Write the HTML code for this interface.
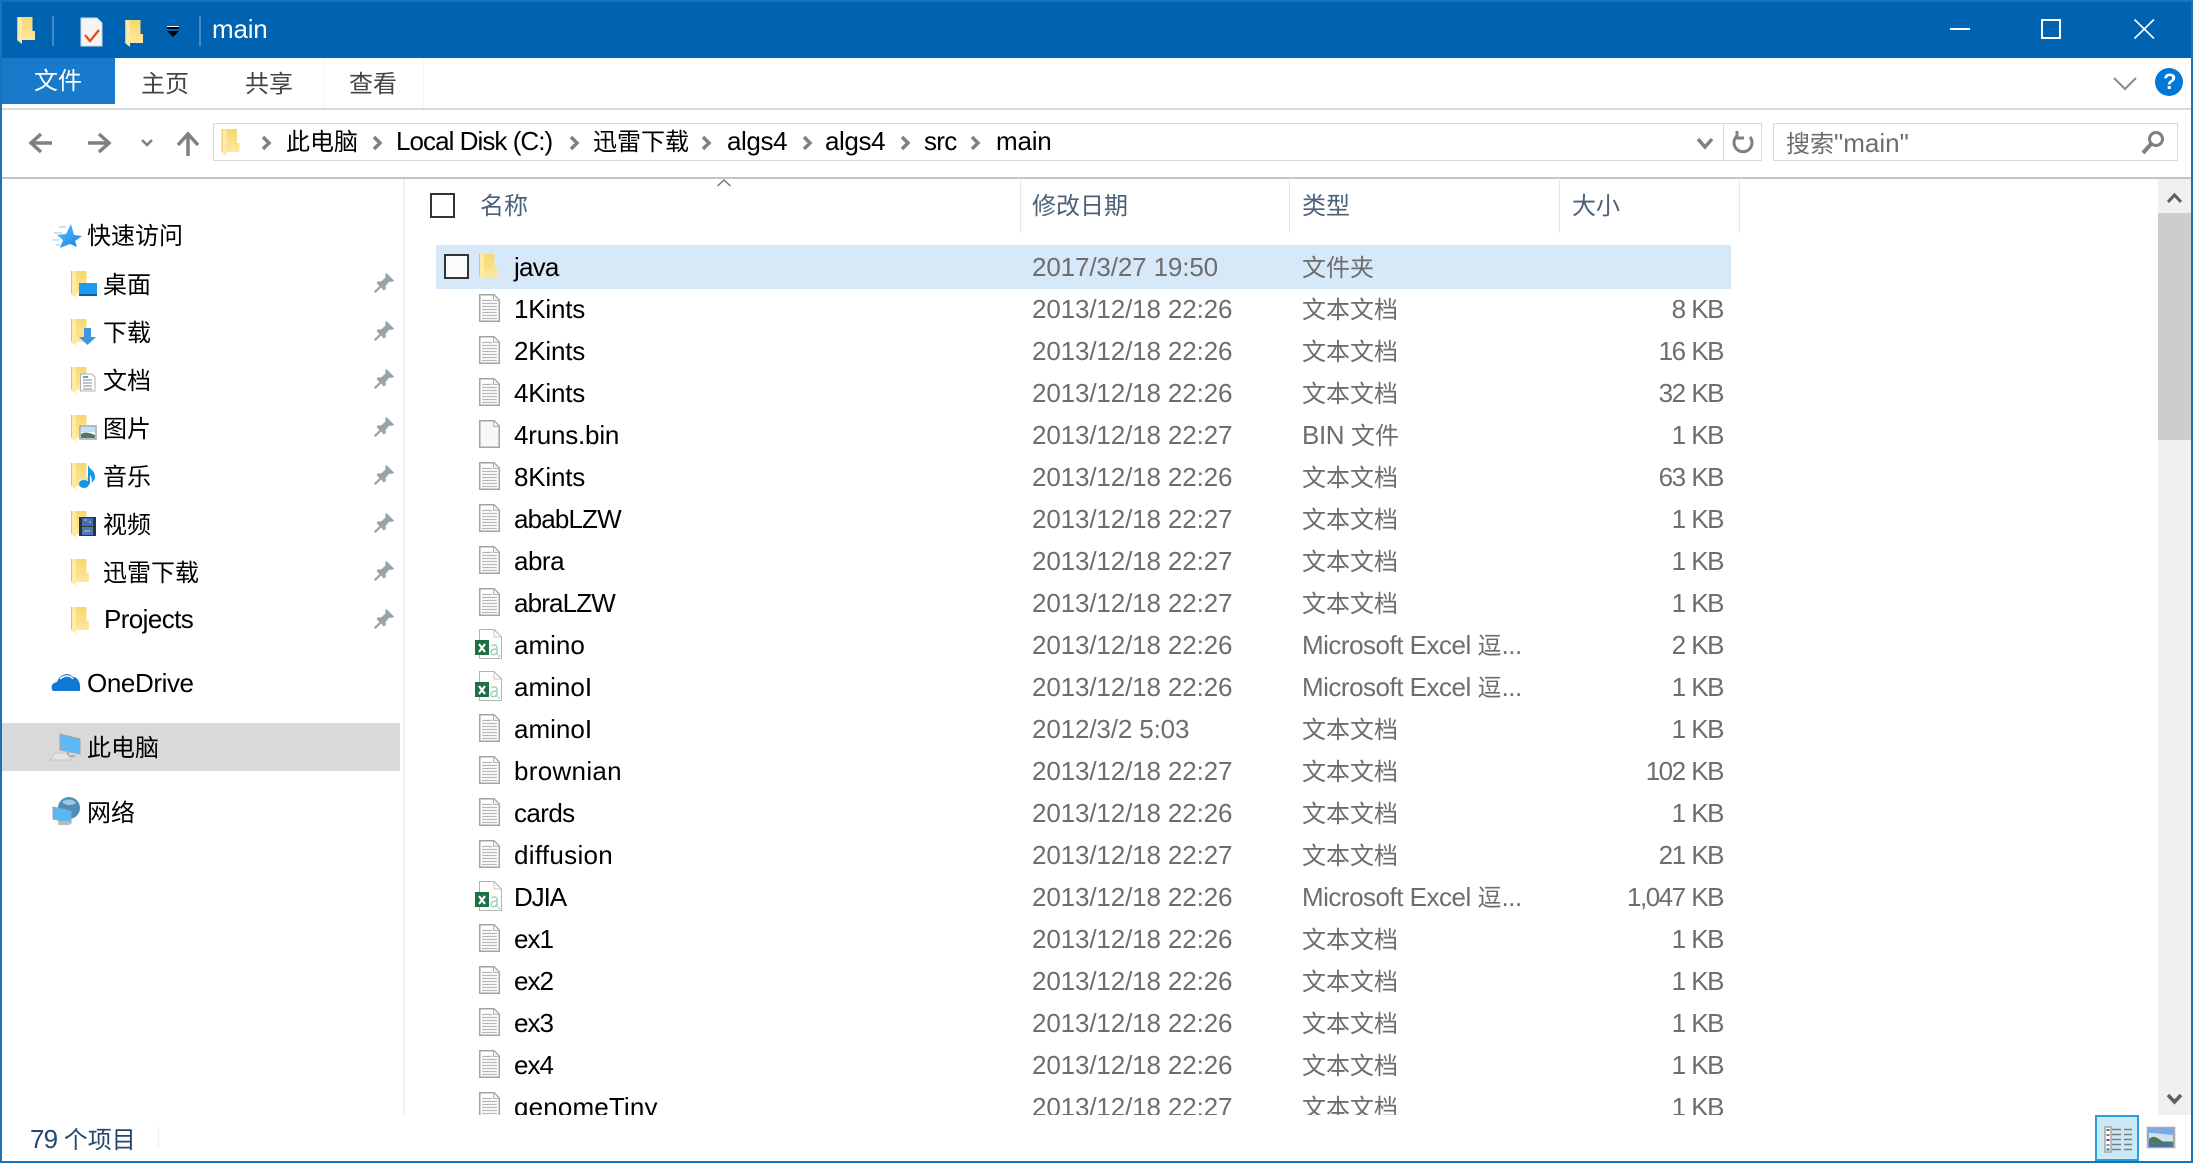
<!DOCTYPE html>
<html lang="zh"><head><meta charset="utf-8"><title>main</title>
<style>
html,body{margin:0;padding:0;background:#fff;width:2193px;height:1163px;overflow:hidden}
body{position:relative;font:24px/34px "Liberation Sans","Noto Sans CJK SC",sans-serif;color:#000}
div,span{position:absolute;white-space:nowrap}
svg{position:absolute;overflow:visible}
i{font-style:normal;font-size:24px;letter-spacing:0}
.r{left:0;width:2150px;height:42px;overflow:visible}
.n{left:514px;top:4px;font-size:26px;letter-spacing:-.2px}
.d{left:1032px;top:4px;color:#6d6d6d;font-size:26px;letter-spacing:-.13px}
.k{left:1302px;top:6px;color:#6d6d6d}
.m{top:4px;font-size:26px;letter-spacing:-.5px}
.s{right:427px;top:4px;color:#6d6d6d;font-size:26px;letter-spacing:-1.5px;word-spacing:1px}
.h{top:190px;color:#4c607a}
.sb{left:103px;letter-spacing:0}
.sep{background:#e5e5e5;width:1px;top:178px;height:55px}
.tab{top:68px;color:#444}
.ad{top:126px;color:#000}
.al{top:124px;color:#000;font-size:26px;letter-spacing:-.4px}
</style></head><body>
<svg width="0" height="0" style="position:absolute"><defs>
<linearGradient id="fg" x1="0" y1="0" x2="0" y2="1"><stop offset="0" stop-color="#f6d76e"/><stop offset="1" stop-color="#ffe79f"/></linearGradient>
<symbol id="fo" viewBox="0 0 18 27"><path d="M0 0H15.500V14H18V23H5L0 21Z" fill="url(#fg)"/><path d="M0 0H4L5 2V27L0 23Z" fill="#fdeaa8"/><path d="M0 0V22L1 23V0Z" fill="#e9c35f"/></symbol>
<symbol id="tx" viewBox="0 0 21 28"><path d="M.75.75H15L20.25 6V27.25H.75Z" fill="#fff" stroke="#a3a3a3" stroke-width="1.5"/><path d="M14.5 1V6.5H20" fill="#f2f2f2" stroke="#b5b5b5"/><path d="M3 6.5H13M3 9.5H18M3 12.5H18M3 15.5H18M3 18.5H18M3 21.5H18M3 24.5H18" stroke="#b4b8bc" stroke-width="1.2"/></symbol>
<symbol id="bn" viewBox="0 0 21 28"><path d="M.75.75H15L20.25 6V27.25H.75Z" fill="#f5f7f9" stroke="#a3a3a3" stroke-width="1.5"/><path d="M14.5 1V6.5H20" fill="#f2f2f2" stroke="#b5b5b5"/></symbol>
<symbol id="xl" viewBox="0 0 27 30"><path d="M4.5.5H19L26.5 8V29.5H4.5Z" fill="#fff" stroke="#b3b3b3"/><path d="M19 1V8H26" fill="none" stroke="#c5c5c5"/><rect x="0" y="11" width="14" height="15" fill="#1d7044"/><path d="M4 15L10 23M10 15L4 23" stroke="#fff" stroke-width="2.2"/><path d="M16.5 17C18 15.5 21.5 15.5 22 18V26M22 20C18 20 15.5 21.5 16 24C16.5 26.5 20.5 26 22 23.5M24.5 26L24 28" fill="none" stroke="#9fd2b3" stroke-width="1.4"/></symbol>
<symbol id="pn" viewBox="0 0 20 20"><path d="M12.5 0L20 7.5L18 9L15.5 8.5L11.5 13L12 15.5L10 17.5L2.5 10L4.5 8L7 8.5L11.5 4.5L11 2Z" fill="#98a2a9"/><path d="M.8 19.2L6.5 13.5" stroke="#98a2a9" stroke-width="2.2"/></symbol>
</defs></svg>

<!-- title bar -->
<div style="left:0;top:0;width:2193px;height:58px;background:#0063b1"></div>
<div style="left:0;top:0;width:2193px;height:2px;background:#1a73b8"></div>
<div style="left:212px;top:12px;color:#fff;font-size:26px;letter-spacing:-.2px">main</div>
<svg style="left:17px;top:17px" width="18" height="27"><use href="#fo"/></svg>
<svg style="left:125px;top:20px" width="18" height="27"><use href="#fo"/></svg>
<svg style="left:0;top:0" width="2193" height="60">
<path d="M53 16V46M200 16V46" stroke="#5d93c2" stroke-width="1.5"/>
<path d="M81 18H97L102 23V46H81Z" fill="#f5f5f5" stroke="#cfd8de"/>
<path d="M85 35L90 41L99 30" fill="none" stroke="#e8501d" stroke-width="2.4"/>
<path d="M167 27H179V29H167ZM167 31H179L173 37Z" fill="#000"/><path d="M167 26.5H179" stroke="#fff" stroke-width="1"/>
<path d="M1950 29H1970" stroke="#fff" stroke-width="2"/>
<rect x="2042" y="20" width="18" height="18" fill="none" stroke="#fff" stroke-width="2"/>
<path d="M2134.5 19.5L2154 38.5M2154 19.5L2134.5 38.5" stroke="#fff" stroke-width="1.6"/>
</svg>

<!-- ribbon -->
<div style="left:2px;top:58px;width:113px;height:46px;background:#1979ca"></div>
<div style="left:34px;top:65px;color:#fff">文件</div>
<div class="tab" style="left:141px">主页</div>
<div class="tab" style="left:245px">共享</div>
<div class="tab" style="left:349px">查看</div>
<div style="left:323px;top:58px;width:1px;height:50px;background:#f5f5f5"></div>
<div style="left:423px;top:58px;width:1px;height:50px;background:#f5f5f5"></div>
<div style="left:2px;top:108px;width:2189px;height:2px;background:#dadada"></div>
<svg style="left:0;top:60px" width="2193" height="50">
<path d="M2114 18L2125 29L2136 18" fill="none" stroke="#8a8a8a" stroke-width="2"/>
<circle cx="2169" cy="22" r="14" fill="#0078d7"/>
</svg>
<div style="left:2163px;top:65px;color:#fff;font-size:22px;font-weight:bold">?</div>

<!-- address bar -->
<div style="left:213px;top:123px;width:1547px;height:36px;border:1.5px solid #d9d9d9"></div>
<div style="left:1723px;top:123px;width:1px;height:38px;background:#d9d9d9"></div>
<div style="left:1773px;top:123px;width:403px;height:36px;border:1.5px solid #d9d9d9"></div>
<svg style="left:221px;top:129px" width="19" height="27"><use href="#fo"/></svg>
<svg style="left:0;top:0" width="2193" height="180">
<g fill="none" stroke="#808080" stroke-width="3.5">
<path d="M52 143H32M41 134L31 143L41 152"/>
<path d="M88 143H108M99 134L109 143L99 152"/>
<path d="M188 156V135M178 145L188 134L198 145"/>
</g>
<g fill="none" stroke="#808080" stroke-width="3.5">
<path d="M142 140L147 145L152 140" stroke-width="2.5"/>
<path d="M263 137L269 143L263 149M374 137L380 143L374 149M571 137L577 143L571 149M703 137L709 143L703 149M804 137L810 143L804 149M902 137L908 143L902 149M972 137L978 143L972 149"/>
<path d="M1698 139L1705 147L1712 139" stroke-width="3.5"/>
<path d="M1737 136A9 9 0 1 0 1750 137M1737 131V138H1744" stroke-width="3"/>
<circle cx="2156" cy="139" r="6.5" stroke-width="3"/>
<path d="M2151 144L2143 153" stroke-width="4"/>
</g>
</svg>
<div class="ad" style="left:286px">此电脑</div>
<div class="al" style="left:396px;letter-spacing:-.95px">Local Disk (C:)</div>
<div class="ad" style="left:593px">迅雷下载</div>
<div class="al" style="left:727px">algs4</div>
<div class="al" style="left:825px">algs4</div>
<div class="al" style="left:924px;letter-spacing:-.7px">src</div>
<div class="al" style="left:996px;letter-spacing:-.2px">main</div>
<div style="left:1786px;top:126px;color:#6d6d6d;font-size:26px"><i>搜索</i>"main"</div>
<div style="left:2px;top:177px;width:2189px;height:2px;background:#c4c4c4"></div>

<!-- sidebar -->
<div style="left:403px;top:179px;width:2px;height:936px;background:#f2f2f2"></div>
<div style="left:2px;top:723px;width:398px;height:48px;background:#d9d9d9"></div>
<svg style="left:0;top:0" width="420" height="840">
<defs><linearGradient id="st" x1="0" y1="0" x2="1" y2="1"><stop offset="0" stop-color="#58c1fb"/><stop offset="1" stop-color="#1580e8"/></linearGradient></defs>
<path d="M71 224L74 235L82 236L75 241L77 247L70 244L60 248L63 240L57 235L66 234Z" fill="url(#st)"/>
<path d="M54 233H62M53 240H59M59 227H66M56 245H61" stroke="#9ed6fb" stroke-width="1.3"/>
<path d="M53 691C50 687 52 683 57 682C59 675 68 671 73 677C78 677 81 683 80 691Z" fill="#0f78d4"/>
<path d="M60 679C64 675 70 675 73 679" fill="none" stroke="#fff" stroke-width="1.4"/>
<path d="M60 734L80 739V754L60 750Z" fill="#5bb9f7" stroke="#a5a5a5"/>
<path d="M68 752V756H75" stroke="#aaa" stroke-width="2" fill="none"/>
<path d="M55 753H66L72 760H50Z" fill="#e4e4e4" stroke="#c6c6c6"/>
<circle cx="69" cy="808" r="11" fill="#4d8fb8"/><path d="M62 802C66 798 74 799 76 803C72 806 66 806 62 802Z" fill="#9cc9e2"/>
<path d="M53 807L71 811V823L53 819Z" fill="#58b8f5" stroke="#8fa6b4"/>
<path d="M58 821H70V825H58Z" fill="#b5bcc0"/>
</svg>
<div style="left:87px;top:220px">快速访问</div>
<div class="sb" style="top:269px">桌面</div>
<div class="sb" style="top:317px">下载</div>
<div class="sb" style="top:365px">文档</div>
<div class="sb" style="top:413px">图片</div>
<div class="sb" style="top:461px">音乐</div>
<div class="sb" style="top:509px">视频</div>
<div class="sb" style="top:557px">迅雷下载</div>
<div class="sb" style="top:602px;left:104px;font-size:26px;letter-spacing:-.6px">Projects</div>
<div style="left:87px;top:666px;font-size:26px;letter-spacing:-.4px">OneDrive</div>
<div style="left:87px;top:732px">此电脑</div>
<div style="left:87px;top:797px">网络</div>
<svg style="left:71px;top:271px" width="18" height="27"><use href="#fo"/></svg>
<svg style="left:71px;top:319px" width="18" height="27"><use href="#fo"/></svg>
<svg style="left:71px;top:367px" width="18" height="27"><use href="#fo"/></svg>
<svg style="left:71px;top:415px" width="18" height="27"><use href="#fo"/></svg>
<svg style="left:71px;top:463px" width="18" height="27"><use href="#fo"/></svg>
<svg style="left:71px;top:511px" width="18" height="27"><use href="#fo"/></svg>
<svg style="left:71px;top:559px" width="18" height="27"><use href="#fo"/></svg>
<svg style="left:71px;top:607px" width="18" height="27"><use href="#fo"/></svg>
<svg style="left:0;top:0" width="110" height="550">
<rect x="79" y="283" width="18" height="12" fill="#1e9bf0"/><path d="M79 295H97" stroke="#0a5f9e" stroke-width="2"/>
<path d="M84 328H91V337H96L87.500 345L79 337H84Z" fill="#3f95e0"/>
<path d="M80.500 374H92L95 377V391H80.500Z" fill="#fff" stroke="#b0b0b0"/><path d="M83 380H92M83 383H92M83 386H92M83 389H92" stroke="#7d8a99"/><path d="M83 377H88" stroke="#2e7fd0" stroke-width="1.5"/>
<rect x="80" y="426" width="16" height="13" fill="#fff" stroke="#a5a5a5" stroke-width="1.5"/><path d="M81 434C85 431 90 433 95 435V438H81Z" fill="#4f7a66"/><rect x="81" y="427" width="14" height="5" fill="#bfe0f5"/>
<ellipse cx="84" cy="484" rx="5" ry="4" fill="#1497e8"/><path d="M88 484V465C90 470 95 470 95 477C95 480 93 481 92 483C92 478 91 476 90 475V484Z" fill="#1497e8"/>
<rect x="79" y="517" width="17" height="19" fill="#333"/><rect x="82" y="518" width="11" height="8" fill="#3a6fc9"/><rect x="82" y="527" width="11" height="8" fill="#4978c6"/><path d="M84 520H87M89 522H91M84 531H90" stroke="#e0a040" stroke-width="1.5"/>
</svg>
<svg style="left:374px;top:273px" width="20" height="20"><use href="#pn"/></svg>
<svg style="left:374px;top:321px" width="20" height="20"><use href="#pn"/></svg>
<svg style="left:374px;top:369px" width="20" height="20"><use href="#pn"/></svg>
<svg style="left:374px;top:417px" width="20" height="20"><use href="#pn"/></svg>
<svg style="left:374px;top:465px" width="20" height="20"><use href="#pn"/></svg>
<svg style="left:374px;top:513px" width="20" height="20"><use href="#pn"/></svg>
<svg style="left:374px;top:561px" width="20" height="20"><use href="#pn"/></svg>
<svg style="left:374px;top:609px" width="20" height="20"><use href="#pn"/></svg>

<!-- column headers -->
<div style="left:430px;top:193px;width:21px;height:21px;border:2.5px solid #333"></div>
<div class="h" style="left:480px">名称</div>
<div class="h" style="left:1032px">修改日期</div>
<div class="h" style="left:1302px">类型</div>
<div class="h" style="left:1572px">大小</div>
<div class="sep" style="left:1020px"></div>
<div class="sep" style="left:1289px"></div>
<div class="sep" style="left:1559px"></div>
<div class="sep" style="left:1739px"></div>
<svg style="left:716px;top:178px" width="16" height="10"><path d="M1.500 8L8 2L14.500 8" fill="none" stroke="#6f6f6f" stroke-width="1.3"/></svg>

<!-- file list -->
<div style="left:0;top:179px;width:2158px;height:936px;overflow:hidden">
<div style="left:436px;top:66px;width:1295px;height:44px;background:#d7e8f8"></div>
<div style="left:444px;top:75px;width:21px;height:21px;border:2.5px solid #333;background:#fbfcfe"></div>
<svg style="left:479px;top:75px" width="18" height="27"><use href="#fo"/></svg>
<div class="r" style="top:67px"><span class="n" style="letter-spacing:-.8px">java</span><span class="d">2017/3/27 19:50</span><span class="k">文件夹</span></div>
<div class="r" style="top:109px"><svg style="left:479px;top:6px" width="21" height="28"><use href="#tx"/></svg><span class="n">1Kints</span><span class="d">2013/12/18 22:26</span><span class="k">文本文档</span><span class="s">8 KB</span></div>
<div class="r" style="top:151px"><svg style="left:479px;top:6px" width="21" height="28"><use href="#tx"/></svg><span class="n">2Kints</span><span class="d">2013/12/18 22:26</span><span class="k">文本文档</span><span class="s">16 KB</span></div>
<div class="r" style="top:193px"><svg style="left:479px;top:6px" width="21" height="28"><use href="#tx"/></svg><span class="n">4Kints</span><span class="d">2013/12/18 22:26</span><span class="k">文本文档</span><span class="s">32 KB</span></div>
<div class="r" style="top:235px"><svg style="left:479px;top:6px" width="21" height="28"><use href="#bn"/></svg><span class="n">4runs.bin</span><span class="d">2013/12/18 22:27</span><span class="k m" style="letter-spacing:-.4px">BIN <i>文件</i></span><span class="s">1 KB</span></div>
<div class="r" style="top:277px"><svg style="left:479px;top:6px" width="21" height="28"><use href="#tx"/></svg><span class="n">8Kints</span><span class="d">2013/12/18 22:26</span><span class="k">文本文档</span><span class="s">63 KB</span></div>
<div class="r" style="top:319px"><svg style="left:479px;top:6px" width="21" height="28"><use href="#tx"/></svg><span class="n" style="letter-spacing:-.85px">ababLZW</span><span class="d">2013/12/18 22:27</span><span class="k">文本文档</span><span class="s">1 KB</span></div>
<div class="r" style="top:361px"><svg style="left:479px;top:6px" width="21" height="28"><use href="#tx"/></svg><span class="n" style="letter-spacing:-.5px">abra</span><span class="d">2013/12/18 22:27</span><span class="k">文本文档</span><span class="s">1 KB</span></div>
<div class="r" style="top:403px"><svg style="left:479px;top:6px" width="21" height="28"><use href="#tx"/></svg><span class="n" style="letter-spacing:-.85px">abraLZW</span><span class="d">2013/12/18 22:27</span><span class="k">文本文档</span><span class="s">1 KB</span></div>
<div class="r" style="top:445px"><svg style="left:475px;top:5px" width="27" height="30"><use href="#xl"/></svg><span class="n" style="letter-spacing:0">amino</span><span class="d">2013/12/18 22:26</span><span class="k m">Microsoft Excel <i>逗</i>...</span><span class="s">2 KB</span></div>
<div class="r" style="top:487px"><svg style="left:475px;top:5px" width="27" height="30"><use href="#xl"/></svg><span class="n" style="letter-spacing:0">aminoI</span><span class="d">2013/12/18 22:26</span><span class="k m">Microsoft Excel <i>逗</i>...</span><span class="s">1 KB</span></div>
<div class="r" style="top:529px"><svg style="left:479px;top:6px" width="21" height="28"><use href="#tx"/></svg><span class="n" style="letter-spacing:0">aminoI</span><span class="d">2012/3/2 5:03</span><span class="k">文本文档</span><span class="s">1 KB</span></div>
<div class="r" style="top:571px"><svg style="left:479px;top:6px" width="21" height="28"><use href="#tx"/></svg><span class="n" style="letter-spacing:.3px">brownian</span><span class="d">2013/12/18 22:27</span><span class="k">文本文档</span><span class="s">102 KB</span></div>
<div class="r" style="top:613px"><svg style="left:479px;top:6px" width="21" height="28"><use href="#tx"/></svg><span class="n" style="letter-spacing:-.6px">cards</span><span class="d">2013/12/18 22:26</span><span class="k">文本文档</span><span class="s">1 KB</span></div>
<div class="r" style="top:655px"><svg style="left:479px;top:6px" width="21" height="28"><use href="#tx"/></svg><span class="n" style="letter-spacing:.3px">diffusion</span><span class="d">2013/12/18 22:27</span><span class="k">文本文档</span><span class="s">21 KB</span></div>
<div class="r" style="top:697px"><svg style="left:475px;top:5px" width="27" height="30"><use href="#xl"/></svg><span class="n" style="letter-spacing:-1.1px">DJIA</span><span class="d">2013/12/18 22:26</span><span class="k m">Microsoft Excel <i>逗</i>...</span><span class="s">1,047 KB</span></div>
<div class="r" style="top:739px"><svg style="left:479px;top:6px" width="21" height="28"><use href="#tx"/></svg><span class="n" style="letter-spacing:-1px">ex1</span><span class="d">2013/12/18 22:26</span><span class="k">文本文档</span><span class="s">1 KB</span></div>
<div class="r" style="top:781px"><svg style="left:479px;top:6px" width="21" height="28"><use href="#tx"/></svg><span class="n" style="letter-spacing:-1px">ex2</span><span class="d">2013/12/18 22:26</span><span class="k">文本文档</span><span class="s">1 KB</span></div>
<div class="r" style="top:823px"><svg style="left:479px;top:6px" width="21" height="28"><use href="#tx"/></svg><span class="n" style="letter-spacing:-1px">ex3</span><span class="d">2013/12/18 22:26</span><span class="k">文本文档</span><span class="s">1 KB</span></div>
<div class="r" style="top:865px"><svg style="left:479px;top:6px" width="21" height="28"><use href="#tx"/></svg><span class="n" style="letter-spacing:-1px">ex4</span><span class="d">2013/12/18 22:26</span><span class="k">文本文档</span><span class="s">1 KB</span></div>
<div class="r" style="top:907px"><svg style="left:479px;top:6px" width="21" height="28"><use href="#tx"/></svg><span class="n" style="letter-spacing:.15px">genomeTiny</span><span class="d">2013/12/18 22:27</span><span class="k">文本文档</span><span class="s">1 KB</span></div>
</div>

<!-- scrollbar -->
<div style="left:2158px;top:179px;width:33px;height:936px;background:#f0f0f0"></div>
<div style="left:2158px;top:213px;width:33px;height:227px;background:#cdcdcd"></div>
<svg style="left:2158px;top:179px" width="33" height="936">
<path d="M10 23L16.500 16L23 23" fill="none" stroke="#606060" stroke-width="3"/>
<path d="M10 916L16.500 923L23 916" fill="none" stroke="#606060" stroke-width="3.5"/>
</svg>

<!-- status bar -->
<div style="left:30px;top:1122px;color:#25476e;font-size:26px;letter-spacing:-.8px">79 <i>个项目</i></div>
<div style="left:158px;top:1127px;width:1px;height:22px;background:#eee"></div>
<div style="left:2095px;top:1115px;width:40px;height:42px;background:#cbe8f6;border:2px solid #26a0da"></div>
<svg style="left:2095px;top:1115px" width="90" height="46">
<rect x="10" y="12" width="6" height="25" fill="#fff" stroke="#a5a5a5" stroke-width="1.5"/>
<path d="M11.500 14H14.500V16H11.500Z" fill="#3b7a7a"/><path d="M11.500 19H14.500V21H11.500Z" fill="#90803a"/><path d="M11.500 24H14.500V26H11.500Z" fill="#a83a20"/><path d="M11.500 29H14.500V31H11.500Z" fill="#6a9ac0"/><path d="M11.500 33.500H14.500V35.500H11.500Z" fill="#3b7a7a"/>
<path d="M17 14.500H26M29 14.500H37M17 19.500H26M29 19.500H37M17 24.500H26M29 24.500H37M17 29.500H26M29 29.500H37M17 34.500H26M29 34.500H37" stroke="#7d7d7d" stroke-width="1.400"/>
<rect x="52.500" y="12.500" width="27" height="20" fill="#7aa8e8" stroke="#a8a8a8" stroke-width="1.500"/>
<path d="M54 18C60 18 68 19 78 20V26H54Z" fill="#cfe2ee"/><path d="M54 24C58 20 62 22 68 27H78V28H54Z" fill="#4f7a5a"/><path d="M54 28H78V32H54Z" fill="#4a72a0"/>
</svg>

<!-- window border -->
<div style="left:0;top:0;width:2px;height:1163px;background:#1a73b8"></div>
<div style="left:2191px;top:0;width:2px;height:1163px;background:#1a73b8"></div>
<div style="left:0;top:1161px;width:2193px;height:2px;background:#1a73b8"></div>
</body></html>
